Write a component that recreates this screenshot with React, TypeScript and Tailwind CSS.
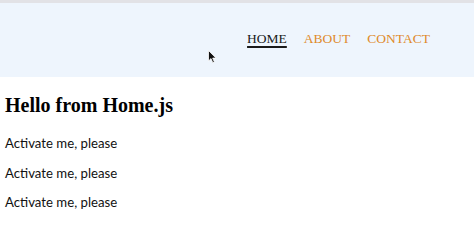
import React from "react";

export default function App() {
  return (
    <div className="w-[474px] h-[251px] bg-white overflow-hidden relative">
      <div className="h-[3px] bg-[#e2e2e6]" />
      <header className="h-[74px] bg-[#eef5fd] flex items-center justify-end pr-[44px] pb-[1px]">
        <nav className="flex gap-[17px] text-[13.5px]" style={{ fontFamily: '"Liberation Serif", serif' }}>
          <a className="text-[#1a1a1a] underline decoration-[1.5px] underline-offset-[3px]">HOME</a>
          <a className="text-[#df8a2b]">ABOUT</a>
          <a className="text-[#df8a2b]">CONTACT</a>
        </nav>
      </header>
      <main className="px-[5px] pt-[15px]">
        <h1 className="text-[20px] font-bold text-black leading-[26px]" style={{ fontFamily: '"Liberation Serif", serif' }}>
          Hello from Home.js
        </h1>
        <div className="mt-[17px] flex flex-col gap-[12px] text-[13.2px] text-[#111] leading-[17.5px]" style={{ fontFamily: 'Lato, sans-serif' }}>
          <p>Activate me, please</p>
          <p>Activate me, please</p>
          <p>Activate me, please</p>
        </div>
      </main>
      <svg className="absolute left-[208px] top-[50px]" width="9" height="14" viewBox="0 0 9 14">
        <path d="M0.5 0.5 L0.5 11 L3 8.6 L4.8 12.8 L6.4 12.1 L4.7 8.1 L8 8.1 Z" fill="#111" stroke="#fff" strokeWidth="0.8" />
      </svg>
    </div>
  );
}
